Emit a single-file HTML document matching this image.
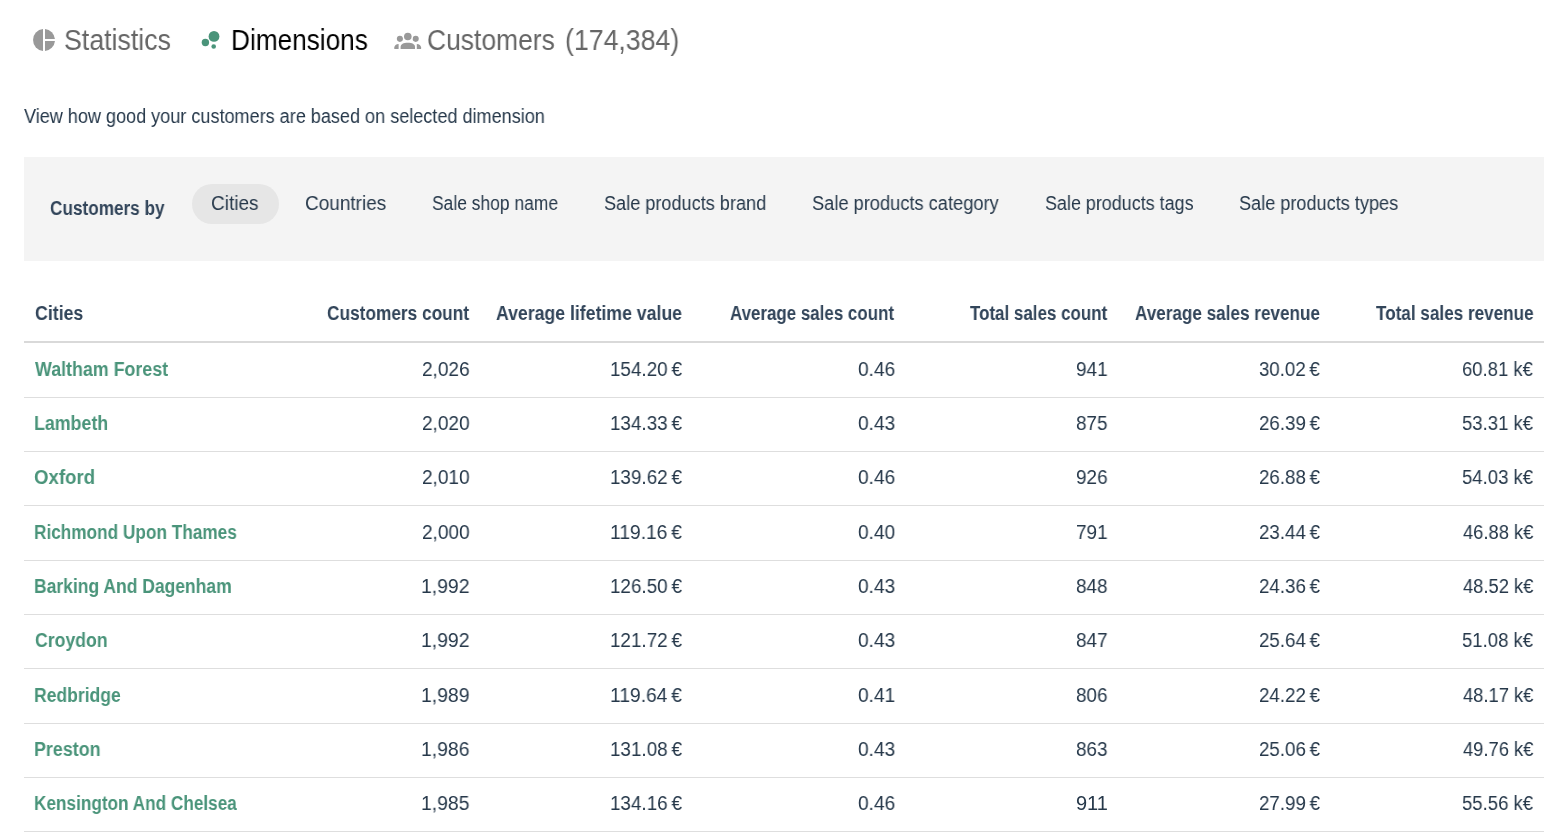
<!DOCTYPE html>
<html><head><meta charset="utf-8"><style>
html,body{margin:0;padding:0;background:#fff;width:1562px;height:834px;overflow:hidden;position:relative}
.t{position:absolute;font-family:"Liberation Sans",sans-serif;line-height:1;white-space:nowrap;transform-origin:0 0;will-change:transform}
.panel{position:absolute;left:24px;top:157px;width:1520px;height:104px;background:#f4f4f4}
.pill{position:absolute;left:192px;top:184px;width:87px;height:40px;border-radius:20px;background:#e6e6e6}
.hh{position:absolute;left:24px;width:1520px;top:341px;height:2px;background:#d9d9d9}
.hl{position:absolute;left:24px;width:1520px;height:1px;background:#dedede}
</style></head><body>

<svg style="position:absolute;left:0;top:0" width="700" height="70" viewBox="0 0 700 70">
  <g fill="#999999">
    <path d="M43 29.05 A11 11 0 0 0 43 50.95 Z"/>
    <path d="M45 29.05 A11 11 0 0 1 54.95 39 L45 39 Z"/>
    <path d="M45 41 L54.95 41 A11 11 0 0 1 45 50.95 Z"/>
  </g>
  <g fill="#4a947a">
    <circle cx="214" cy="36.4" r="5.4"/>
    <circle cx="205.4" cy="42.5" r="3.7"/>
    <circle cx="213.7" cy="46.5" r="2.3"/>
  </g>
  <g fill="#999999">
    <circle cx="399.9" cy="38.85" r="3.05"/>
    <circle cx="415.7" cy="38.85" r="3.05"/>
    <circle cx="407.8" cy="36.5" r="5.1" fill="#ffffff"/>
    <circle cx="407.8" cy="36.5" r="3.8"/>
    <path d="M400.6 49 V47 C400.6 44.2 403.5 42.8 407.8 42.8 C412.1 42.8 415 44.2 415 47 V49 Z"/>
    <path d="M394.3 49 V47.6 C394.3 45.5 396.2 44.2 398.6 44 V49 Z"/>
    <path d="M421.1 49 V47.6 C421.1 45.5 419.2 44.2 416.8 44 V49 Z"/>
  </g>
</svg>
<div class="panel"></div>
<div class="pill"></div>
<div class="hh"></div>
<div class="hl" style="top:397px"></div>
<div class="hl" style="top:451px"></div>
<div class="hl" style="top:505px"></div>
<div class="hl" style="top:560px"></div>
<div class="hl" style="top:614px"></div>
<div class="hl" style="top:668px"></div>
<div class="hl" style="top:723px"></div>
<div class="hl" style="top:777px"></div>
<div class="hl" style="top:831px"></div>
<div class="t" style="left:63.98px;top:26px;font-size:29px;font-weight:400;color:#666666;transform:scaleX(0.9221)">Statistics</div>
<div class="t" style="left:231.20px;top:26px;font-size:29px;font-weight:400;color:#000000;transform:scaleX(0.9037)">Dimensions</div>
<div class="t" style="left:427.27px;top:26px;font-size:29px;font-weight:400;color:#666666;transform:scaleX(0.9114)">Customers</div>
<div class="t" style="left:565.48px;top:26px;font-size:29px;font-weight:400;color:#666666;transform:scaleX(0.9203)">(174,384)</div>
<div class="t" style="left:24.00px;top:106px;font-size:20px;font-weight:400;color:#26384a;transform:scaleX(0.9032)">View how good your customers are based on selected dimension</div>
<div class="t" style="left:50.18px;top:198px;font-size:20px;font-weight:700;color:#32455a;transform:scaleX(0.8590)">Customers by</div>
<div class="t" style="left:211.05px;top:193px;font-size:20px;font-weight:400;color:#26384a;transform:scaleX(0.9488)">Cities</div>
<div class="t" style="left:305.16px;top:193px;font-size:20px;font-weight:400;color:#26384a;transform:scaleX(0.9493)">Countries</div>
<div class="t" style="left:432.19px;top:193px;font-size:20px;font-weight:400;color:#26384a;transform:scaleX(0.8719)">Sale shop name</div>
<div class="t" style="left:604.24px;top:193px;font-size:20px;font-weight:400;color:#26384a;transform:scaleX(0.9060)">Sale products brand</div>
<div class="t" style="left:812.43px;top:193px;font-size:20px;font-weight:400;color:#26384a;transform:scaleX(0.9127)">Sale products category</div>
<div class="t" style="left:1045.33px;top:193px;font-size:20px;font-weight:400;color:#26384a;transform:scaleX(0.8968)">Sale products tags</div>
<div class="t" style="left:1239.27px;top:193px;font-size:20px;font-weight:400;color:#26384a;transform:scaleX(0.9059)">Sale products types</div>
<div class="t" style="left:35.30px;top:303px;font-size:20px;font-weight:700;color:#32455a;transform:scaleX(0.8867)">Cities</div>
<div class="t" style="left:327.40px;top:303px;font-size:20px;font-weight:700;color:#32455a;transform:scaleX(0.8638)">Customers count</div>
<div class="t" style="left:496.20px;top:303px;font-size:20px;font-weight:700;color:#32455a;transform:scaleX(0.8838)">Average lifetime value</div>
<div class="t" style="left:730.11px;top:303px;font-size:20px;font-weight:700;color:#32455a;transform:scaleX(0.8461)">Average sales count</div>
<div class="t" style="left:970.00px;top:303px;font-size:20px;font-weight:700;color:#32455a;transform:scaleX(0.8476)">Total sales count</div>
<div class="t" style="left:1135.24px;top:303px;font-size:20px;font-weight:700;color:#32455a;transform:scaleX(0.8558)">Average sales revenue</div>
<div class="t" style="left:1375.70px;top:303px;font-size:20px;font-weight:700;color:#32455a;transform:scaleX(0.8558)">Total sales revenue</div>
<div class="t" style="left:35.20px;top:359px;font-size:20px;font-weight:700;color:#4a947a;transform:scaleX(0.8920)">Waltham Forest</div>
<div class="t" style="left:421.55px;top:359px;font-size:20px;font-weight:400;color:#26384a;transform:scaleX(0.9504)">2,026</div>
<div class="t" style="left:610.17px;top:359px;font-size:20px;font-weight:400;color:#26384a;transform:scaleX(0.9425)">154.20 €</div>
<div class="t" style="left:858.17px;top:359px;font-size:20px;font-weight:400;color:#26384a;transform:scaleX(0.9561)">0.46</div>
<div class="t" style="left:1076.32px;top:359px;font-size:20px;font-weight:400;color:#26384a;transform:scaleX(0.9499)">941</div>
<div class="t" style="left:1259.22px;top:359px;font-size:20px;font-weight:400;color:#26384a;transform:scaleX(0.9325)">30.02 €</div>
<div class="t" style="left:1462.08px;top:359px;font-size:20px;font-weight:400;color:#26384a;transform:scaleX(0.9245)">60.81 k€</div>
<div class="t" style="left:34.31px;top:413px;font-size:20px;font-weight:700;color:#4a947a;transform:scaleX(0.8912)">Lambeth</div>
<div class="t" style="left:421.55px;top:413px;font-size:20px;font-weight:400;color:#26384a;transform:scaleX(0.9504)">2,020</div>
<div class="t" style="left:610.17px;top:413px;font-size:20px;font-weight:400;color:#26384a;transform:scaleX(0.9425)">134.33 €</div>
<div class="t" style="left:858.17px;top:413px;font-size:20px;font-weight:400;color:#26384a;transform:scaleX(0.9561)">0.43</div>
<div class="t" style="left:1076.35px;top:413px;font-size:20px;font-weight:400;color:#26384a;transform:scaleX(0.9449)">875</div>
<div class="t" style="left:1259.06px;top:413px;font-size:20px;font-weight:400;color:#26384a;transform:scaleX(0.9367)">26.39 €</div>
<div class="t" style="left:1462.01px;top:413px;font-size:20px;font-weight:400;color:#26384a;transform:scaleX(0.9271)">53.31 k€</div>
<div class="t" style="left:34.36px;top:467px;font-size:20px;font-weight:700;color:#4a947a;transform:scaleX(0.9328)">Oxford</div>
<div class="t" style="left:421.55px;top:467px;font-size:20px;font-weight:400;color:#26384a;transform:scaleX(0.9504)">2,010</div>
<div class="t" style="left:610.17px;top:467px;font-size:20px;font-weight:400;color:#26384a;transform:scaleX(0.9425)">139.62 €</div>
<div class="t" style="left:858.17px;top:467px;font-size:20px;font-weight:400;color:#26384a;transform:scaleX(0.9561)">0.46</div>
<div class="t" style="left:1076.32px;top:467px;font-size:20px;font-weight:400;color:#26384a;transform:scaleX(0.9482)">926</div>
<div class="t" style="left:1259.06px;top:467px;font-size:20px;font-weight:400;color:#26384a;transform:scaleX(0.9367)">26.88 €</div>
<div class="t" style="left:1462.01px;top:467px;font-size:20px;font-weight:400;color:#26384a;transform:scaleX(0.9271)">54.03 k€</div>
<div class="t" style="left:34.34px;top:522px;font-size:20px;font-weight:700;color:#4a947a;transform:scaleX(0.8610)">Richmond Upon Thames</div>
<div class="t" style="left:421.55px;top:522px;font-size:20px;font-weight:400;color:#26384a;transform:scaleX(0.9504)">2,000</div>
<div class="t" style="left:610.12px;top:522px;font-size:20px;font-weight:400;color:#26384a;transform:scaleX(0.9608)">119.16 €</div>
<div class="t" style="left:858.17px;top:522px;font-size:20px;font-weight:400;color:#26384a;transform:scaleX(0.9548)">0.40</div>
<div class="t" style="left:1075.86px;top:522px;font-size:20px;font-weight:400;color:#26384a;transform:scaleX(0.9493)">791</div>
<div class="t" style="left:1259.06px;top:522px;font-size:20px;font-weight:400;color:#26384a;transform:scaleX(0.9367)">23.44 €</div>
<div class="t" style="left:1463.00px;top:522px;font-size:20px;font-weight:400;color:#26384a;transform:scaleX(0.9177)">46.88 k€</div>
<div class="t" style="left:34.18px;top:576px;font-size:20px;font-weight:700;color:#4a947a;transform:scaleX(0.8748)">Barking And Dagenham</div>
<div class="t" style="left:421.22px;top:576px;font-size:20px;font-weight:400;color:#26384a;transform:scaleX(0.9682)">1,992</div>
<div class="t" style="left:610.17px;top:576px;font-size:20px;font-weight:400;color:#26384a;transform:scaleX(0.9425)">126.50 €</div>
<div class="t" style="left:858.17px;top:576px;font-size:20px;font-weight:400;color:#26384a;transform:scaleX(0.9561)">0.43</div>
<div class="t" style="left:1076.35px;top:576px;font-size:20px;font-weight:400;color:#26384a;transform:scaleX(0.9449)">848</div>
<div class="t" style="left:1259.06px;top:576px;font-size:20px;font-weight:400;color:#26384a;transform:scaleX(0.9367)">24.36 €</div>
<div class="t" style="left:1463.00px;top:576px;font-size:20px;font-weight:400;color:#26384a;transform:scaleX(0.9177)">48.52 k€</div>
<div class="t" style="left:35.20px;top:630px;font-size:20px;font-weight:700;color:#4a947a;transform:scaleX(0.8828)">Croydon</div>
<div class="t" style="left:421.22px;top:630px;font-size:20px;font-weight:400;color:#26384a;transform:scaleX(0.9682)">1,992</div>
<div class="t" style="left:610.17px;top:630px;font-size:20px;font-weight:400;color:#26384a;transform:scaleX(0.9425)">121.72 €</div>
<div class="t" style="left:858.17px;top:630px;font-size:20px;font-weight:400;color:#26384a;transform:scaleX(0.9561)">0.43</div>
<div class="t" style="left:1076.35px;top:630px;font-size:20px;font-weight:400;color:#26384a;transform:scaleX(0.9466)">847</div>
<div class="t" style="left:1259.06px;top:630px;font-size:20px;font-weight:400;color:#26384a;transform:scaleX(0.9367)">25.64 €</div>
<div class="t" style="left:1462.01px;top:630px;font-size:20px;font-weight:400;color:#26384a;transform:scaleX(0.9271)">51.08 k€</div>
<div class="t" style="left:34.33px;top:685px;font-size:20px;font-weight:700;color:#4a947a;transform:scaleX(0.8776)">Redbridge</div>
<div class="t" style="left:421.22px;top:685px;font-size:20px;font-weight:400;color:#26384a;transform:scaleX(0.9682)">1,989</div>
<div class="t" style="left:610.12px;top:685px;font-size:20px;font-weight:400;color:#26384a;transform:scaleX(0.9608)">119.64 €</div>
<div class="t" style="left:858.17px;top:685px;font-size:20px;font-weight:400;color:#26384a;transform:scaleX(0.9561)">0.41</div>
<div class="t" style="left:1076.35px;top:685px;font-size:20px;font-weight:400;color:#26384a;transform:scaleX(0.9449)">806</div>
<div class="t" style="left:1259.06px;top:685px;font-size:20px;font-weight:400;color:#26384a;transform:scaleX(0.9367)">24.22 €</div>
<div class="t" style="left:1463.00px;top:685px;font-size:20px;font-weight:400;color:#26384a;transform:scaleX(0.9177)">48.17 k€</div>
<div class="t" style="left:34.31px;top:739px;font-size:20px;font-weight:700;color:#4a947a;transform:scaleX(0.8942)">Preston</div>
<div class="t" style="left:421.22px;top:739px;font-size:20px;font-weight:400;color:#26384a;transform:scaleX(0.9671)">1,986</div>
<div class="t" style="left:610.17px;top:739px;font-size:20px;font-weight:400;color:#26384a;transform:scaleX(0.9425)">131.08 €</div>
<div class="t" style="left:858.17px;top:739px;font-size:20px;font-weight:400;color:#26384a;transform:scaleX(0.9561)">0.43</div>
<div class="t" style="left:1076.35px;top:739px;font-size:20px;font-weight:400;color:#26384a;transform:scaleX(0.9449)">863</div>
<div class="t" style="left:1259.06px;top:739px;font-size:20px;font-weight:400;color:#26384a;transform:scaleX(0.9367)">25.06 €</div>
<div class="t" style="left:1463.00px;top:739px;font-size:20px;font-weight:400;color:#26384a;transform:scaleX(0.9177)">49.76 k€</div>
<div class="t" style="left:34.02px;top:793px;font-size:20px;font-weight:700;color:#4a947a;transform:scaleX(0.8596)">Kensington And Chelsea</div>
<div class="t" style="left:421.22px;top:793px;font-size:20px;font-weight:400;color:#26384a;transform:scaleX(0.9671)">1,985</div>
<div class="t" style="left:610.17px;top:793px;font-size:20px;font-weight:400;color:#26384a;transform:scaleX(0.9425)">134.16 €</div>
<div class="t" style="left:858.17px;top:793px;font-size:20px;font-weight:400;color:#26384a;transform:scaleX(0.9561)">0.46</div>
<div class="t" style="left:1076.32px;top:793px;font-size:20px;font-weight:400;color:#26384a;transform:scaleX(0.9943)">911</div>
<div class="t" style="left:1259.06px;top:793px;font-size:20px;font-weight:400;color:#26384a;transform:scaleX(0.9367)">27.99 €</div>
<div class="t" style="left:1462.01px;top:793px;font-size:20px;font-weight:400;color:#26384a;transform:scaleX(0.9271)">55.56 k€</div>
</body></html>
